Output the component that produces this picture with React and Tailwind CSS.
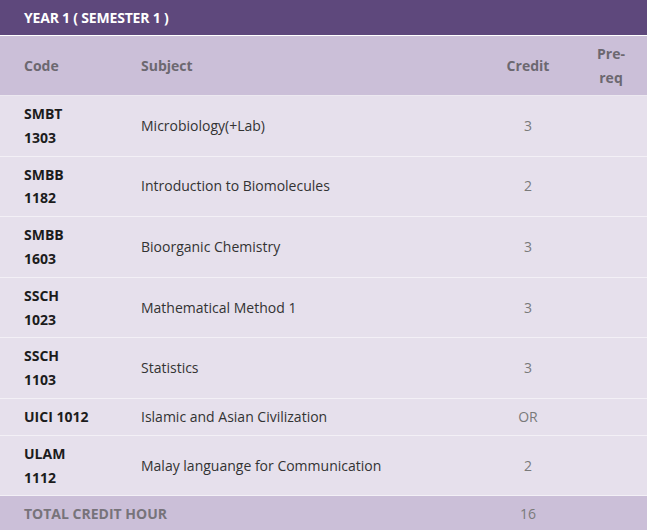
import React from 'react';

const courses = [
  { code: ['SMBT', '1303'], subject: 'Microbiology(+Lab)', credit: '3' },
  { code: ['SMBB', '1182'], subject: 'Introduction to Biomolecules', credit: '2' },
  { code: ['SMBB', '1603'], subject: 'Bioorganic Chemistry', credit: '3' },
  { code: ['SSCH', '1023'], subject: 'Mathematical Method 1', credit: '3' },
  { code: ['SSCH', '1103'], subject: 'Statistics', credit: '3' },
  { code: ['UICI 1012'], subject: 'Islamic and Asian Civilization', credit: 'OR' },
  { code: ['ULAM', '1112'], subject: 'Malay languange for Communication', credit: '2' },
];

const cols = 'grid grid-cols-[117px_1fr_88px_75px]';

export default function App() {
  return (
    <div className="w-[647px] h-[530px] overflow-hidden bg-white font-['Open_Sans',sans-serif] text-[14px]">
      <div className="h-[35px] bg-[#5e487c] flex items-center pl-6 text-white font-bold text-[14px] tracking-[-0.2px]">
        YEAR 1 ( SEMESTER 1 )
      </div>

      <div className={`${cols} mt-px bg-[#cbbfd8] text-[#6c6870] font-bold leading-[23.5px] border-b border-[#ece8f0]`}>
        <div className="pl-6 py-[6px] flex items-center">Code</div>
        <div className="pl-6 py-[6px] flex items-center">Subject</div>
        <div className="py-[6px] flex items-center justify-center">Credit</div>
        <div className="py-[6px] pl-[3px] text-center">
          Pre-
          <br />
          req
        </div>
      </div>

      {courses.map((c) => (
        <div key={c.subject} className={`${cols} bg-[#e6e0ec] leading-[23.8px] border-b border-[#f3f0f6]`}>
          <div className="pl-6 py-[6px] font-bold text-[#1c1c1c]">
            {c.code.map((line) => (
              <div key={line}>{line}</div>
            ))}
          </div>
          <div className="pl-6 py-[6px] flex items-center text-[#333]">{c.subject}</div>
          <div className="py-[6px] flex items-center justify-center text-[#7a7a7a]">{c.credit}</div>
          <div />
        </div>
      ))}

      <div className={`${cols} bg-[#cbbfd8] leading-[23.8px]`}>
        <div className="col-span-2 pl-6 py-[6px] font-bold text-[#77737a]">TOTAL CREDIT HOUR</div>
        <div className="py-[6px] text-center text-[#7a7a7a]">16</div>
        <div />
      </div>
    </div>
  );
}
